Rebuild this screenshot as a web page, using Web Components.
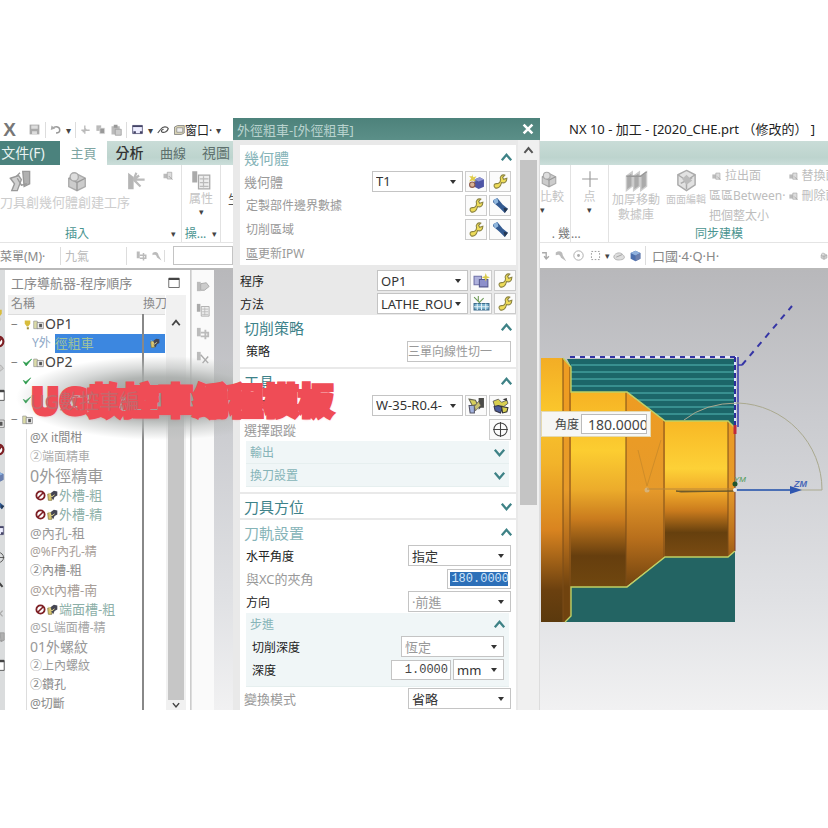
<!DOCTYPE html>
<html lang="zh-Hant">
<head>
<meta charset="utf-8">
<title>NX 10 - 加工</title>
<style>
body { margin: 0; background: #fff; color: #444; font-family: "Noto Sans", "Noto Sans CJK TC", sans-serif; font-size: 12px; }
</style>
</head>
<body>
<nx-app></nx-app>
<script>
const ICONS = {
  save: '<path d="M2 2h12v12H2z" fill="#aaa"/><path d="M4 3h8v4H4zM5 10h6v4H5z" fill="#ddd"/>',
  undo: '<path d="M3 6c5-4 10-2 10 2 0 3-3 4-5 4" fill="none" stroke="#999" stroke-width="2"/><path d="M1 8l1-6 5 4z" fill="#aaa"/>',
  cut: '<path d="M7 2v12M2 9h12M4 12l5-5" stroke="#bbb" stroke-width="2" fill="none"/>',
  copy: '<path d="M2 2h7v8H2z" fill="#bbb"/><path d="M7 6h7v8H7z" fill="#999" stroke="#ddd"/>',
  paste: '<path d="M2 3h11v11H2z" fill="#bbb"/><path d="M5 1h5v4H5z" fill="#999"/><path d="M7 7h8v8H7z" fill="#ccc" stroke="#999"/>',
  frame: '<path d="M2 3h12v10H2z" fill="#eef" stroke="#557" /><path d="M2 3h12v2H2z" fill="#446"/><path d="M3 10h3v3H3zM11 10h3v3h-3z" fill="#446"/>',
  link: '<path d="M1 12l4-5c3-4 8-4 10-1-1 4-5 6-8 5-2-1-1-4 2-4" fill="none" stroke="#555" stroke-width="1.6"/>',
  haze: '<path d="M1 10c0-4 6-7 10-4s4 6 0 7-9 1-10-3z" fill="#ddd" stroke="#aaa"/><path d="M4 10l7-3" stroke="#999"/>',
  win: '<path d="M2 4l4-2h9v10l-4 2H2z" fill="#d9d3b4" stroke="#777"/><path d="M5 5h8v6H5z" fill="#eee" stroke="#888"/>',
  tool: '<path d="M1 6l6-2 2 3-3 8H2l2-5z" fill="#d0d0d0" stroke="#999"/><path d="M10 1h5v9l-4 2z" fill="#b0b0b0" stroke="#999"/><path d="M6 6l3 5 4-1M8 2l-3 3" fill="none" stroke="#999"/>',
  box: '<path d="M2 6l6-3 6 3v6l-6 3-6-3z" fill="#ccc" stroke="#aaa"/><path d="M2 6l6 3 6-3M8 9v6" fill="none" stroke="#999"/><circle cx="6" cy="5" r="3" fill="#ddd" stroke="#aaa"/>',
  op: '<path d="M3 2l4 3v9H3z" fill="#b5b5b5"/><path d="M7 7h8M9 2l-2 5 5 5M11 4l-4 3" stroke="#bbb" stroke-width="1.6" fill="none"/>',
  prop: '<path d="M1 1h4v9H1z" fill="#aaa"/><path d="M6 4h9v11H6z" fill="#eee" stroke="#aaa"/><path d="M7 7h7M7 10h7M7 13h7M10 5v9" stroke="#bbb"/>',
  small: '<path d="M2 5h8v6H2z" fill="#bbb"/><path d="M7 3h6v9H7z" fill="#ddd" stroke="#aaa"/><path d="M9 8l5 5" stroke="#999"/>',
  plus: '<path d="M8 1v14M1 8h14" stroke="#999"/>',
  stack: '<path d="M1 5l4-3v10l-4 3zM6 5l4-3v10l-4 3zM11 5l4-3v10l-4 3z" fill="#aaa" stroke="#ccc"/><path d="M1 5h10l4-3" fill="none" stroke="#999"/>',
  hex: '<path d="M8 1l6 3v7l-6 4-6-4V4z" fill="#e2e2e2" stroke="#aaa"/><path d="M2 4l6 4 6-4M8 8v6M4 10l8-4" fill="none" stroke="#aaa"/><path d="M5 7l3-3 4 4-4 3z" fill="#bbb"/>',
  cube: '<path d="M2 5l6-3 6 3v7l-6 3-6-3z" fill="#4b6fae"/><path d="M2 5l6-3 6 3-6 3z" fill="#8fb1de"/><path d="M8 8l6-3v7l-6 3z" fill="#6b7fae"/>',
  target: '<circle cx="8" cy="8" r="5" fill="none" stroke="#aaa"/><circle cx="8" cy="8" r="1.5" fill="#aaa"/>',
  dash: '<path d="M3 3h10v10H3z" fill="none" stroke="#888" stroke-dasharray="2 2"/>',
  arrow: '<path d="M3 4h6v8M6 9l3 4 4-4" fill="none" stroke="#aaa" stroke-width="2"/>',
  wand: '<path d="M2 4c4-3 8-1 8 3l4 7-6-4C7 6 5 6 2 7z" fill="#bbb"/>',
  max: '<path d="M1 2h14v12H1z" fill="#fff" stroke="#444"/><path d="M1 1h14v3H1z" fill="#444"/>',
  up: '<path d="M3 11l5-6 5 6" fill="none" stroke="currentColor" stroke-width="2.4"/>',
  down: '<path d="M3 5l5 6 5-6" fill="none" stroke="currentColor" stroke-width="2.4"/>',
  folder: '<path d="M1 3h5l1 2v9H1z" fill="#dcdca8" stroke="#999"/><path d="M6 5h9v9H6z" fill="#eee" stroke="#777"/><path d="M9 7h4v5H9z" fill="#555"/>',
  bulb: '<path d="M4 2h8v5l-3 4H7L4 7z" fill="#d8bd3c"/><path d="M7 12h3v3H7z" fill="#a0903c"/>',
  check: '<path d="M2 7l4 6 8-10-8 6z" fill="#2c9a4c" stroke="#2c9a4c"/>',
  ban: '<circle cx="8" cy="8" r="6" fill="#fff" stroke="#7d1f24" stroke-width="2.6"/><path d="M4 12l8-8" stroke="#7d1f24" stroke-width="2.4"/>',
  mill: '<path d="M1 6l6-1v10H2z" fill="#d8c56c" stroke="#776a35"/><path d="M6 4l4-3 5 1v6l-4 2-2 5-3-5z" fill="#454552"/><path d="M2 4l5 6 4-3" stroke="#e5d990" stroke-width="1.4" fill="none"/>',
  wrench: '<path d="M3 14c-2-2-1-4 1-4 3 0 4-2 4-4-1-2 1-5 4-4l-2 2 1 2 3-1c0 3-2 5-5 4-1 4-3 6-6 5z" fill="#eedc58" stroke="#8b8340"/>',
  torch: '<path d="M1 3l4-2 5 6 5 4-3 4-5-5-6-5z" fill="#335a91"/><path d="M1 3l4-2 1 4-3 2z" fill="#8fb6dd"/><path d="M11 10l4 1-3 4z" fill="#24364f"/>',
  geo: '<path d="M6 6l5-2 4 2v7l-5 2-4-2z" fill="#4d55a5"/><path d="M6 6l5-2 4 2-5 2z" fill="#8f95d4"/><circle cx="4" cy="11" r="2.5" fill="#d9b394" stroke="#8c5a4a"/><path d="M4 1l1 3 3-1-2 3 2 2-4-1-3 1 2-3-2-2h3z" fill="#e0cc49"/>',
  prog: '<path d="M1 4h7v8H1z" fill="#aeb1dc" stroke="#6d6fa7"/><path d="M6 7h8v7H6z" fill="#8c8fcb" stroke="#55588f"/><path d="M12 1l1 3 3 1-3 1-1 3-1-3-3-1 3-1z" fill="#d8c94b"/>',
  meth: '<path d="M1 8h14v6H1z" fill="#7ab3cf" stroke="#3c6b8b"/><path d="M1 11h14M4 8v6M8 8v6M12 8v6" stroke="#e5f2f8"/><path d="M1 2l5 5 4-4M5 1v5" stroke="#6d9a55" fill="none"/>',
  tnew: '<path d="M1 8h5v7H2z" fill="#a3b3df" stroke="#556"/><path d="M1 2l6 1 2 4-5 1z" fill="#d7d05c" stroke="#665"/><path d="M10 1h5v9h-3l-2 2z" fill="#4b4b48"/><path d="M6 9l4-5 2 4-5 5z" fill="#c9c272" stroke="#555" stroke-width=".7"/>',
  tedit: '<path d="M1 4l5-2 3 3 5-2 1 3-4 3-4-1-4 2z" fill="#d8cf50" stroke="#555" stroke-width=".8"/><path d="M2 9l4-1 4 2-2 5-5-2z" fill="#4b5c9a" stroke="#334"/><path d="M9 9l6 1-1 4-4 1z" fill="#d8cf50" stroke="#333"/><path d="M10 2l4-1v3z" fill="#333"/>',
  cross: '<circle cx="8" cy="8" r="6.2" fill="none" stroke="#444"/><path d="M8 1v14M1 8h14" stroke="#444"/>',
  close: '<path d="M3 3l10 10M13 3L3 13" stroke="#fff" stroke-width="3"/>',
  pick: '<path d="M1 3h4v10H1z" fill="#bbb"/><path d="M5 5l6-1 3 4-5 4H5z" fill="#ccc" stroke="#aaa"/>',
  pickx: '<path d="M1 2h4v9H1z" fill="#bbb"/><path d="M5 5l8 9M13 7l-6 7" stroke="#aaa" stroke-width="1.5"/>',
  pickp: '<path d="M1 2h4v9H1z" fill="#bbb"/><path d="M5 7h8v4H5M10 4v10" fill="none" stroke="#bbb" stroke-width="2"/>'
};
const svg = (n, s) => `<svg viewBox="0 0 16 16" width="${s}" height="${s}" aria-hidden="true">${ICONS[n] || ''}</svg>`;
const define = (name, render) => customElements.define(name, class extends HTMLElement {
  connectedCallback() {
    if (this.shadowRoot) return;
    this.attachShadow({ mode: 'open' }).innerHTML = '<style>:host,*{box-sizing:border-box}svg{display:block;flex:none}button{font:inherit;color:inherit;border:0;padding:0;background:none}</style>' + render(this);
  }
});

define('nx-icon', el => {
  const s = el.getAttribute('size') || 16;
  return `<style>:host{display:inline-block;flex:none}</style>${svg(el.getAttribute('name'), s)}`;
});

define('nx-titlebar', () => `
<style>
:host{display:grid;grid-template-columns:var(--left) 1fr;column-gap:var(--dialog);height:23px;background:#fff}
.quick{display:flex;align-items:center;overflow:hidden;gap:4px}
.logo{font:bold 19px "Liberation Sans",sans-serif;color:#777;width:16px;margin-right:8px;display:flex;justify-content:flex-end;flex:none}
.sep{width:1px;height:16px;background:#ddd}
.caret{font-size:10px;color:#444}
.win{display:flex;align-items:center;white-space:nowrap;color:#222}
h1{margin:0;padding-left:29px;font-size:13px;font-weight:400;line-height:23px;color:#222;white-space:pre}
</style>
<div class="quick"><span class="logo">X</span>
<button aria-label="保存">${svg('save', 13)}</button><i class="sep"></i>
<button aria-label="撤銷">${svg('undo', 12)}</button><span class="caret">▾</span><i class="sep"></i>
<button aria-label="剪切">${svg('cut', 11)}</button><button aria-label="複製">${svg('copy', 11)}</button><button aria-label="粘貼">${svg('paste', 12)}</button><i class="sep"></i>
<button aria-label="視窗框">${svg('frame', 13)}</button><span class="caret">▾</span>
<button aria-label="鏈接">${svg('link', 12)}</button>
<button class="win">${svg('win', 12)}窗口·</button><span class="caret">▾</span></div>
<h1>NX 10 - 加工 - [2020_CHE.prt （修改的） ]</h1>`);

define('nx-tabs', () => `
<style>
:host{display:flex;height:24px;background:linear-gradient(#c9dcd7,#bdd4ce 70%,#cbdeda);font-size:14px;color:#5d706d;overflow:hidden}
button{line-height:24px;text-align:center;white-space:nowrap;flex:none}
.file{width:60px;background:#4b827d;color:#e9f3f1;padding-right:14px}
.home{width:47px;background:#fff;color:#7ea5a2;font-size:13px}
.an{width:45px;color:#333;font-weight:500}.cv{width:42px;font-size:13px}.vw{width:44px}
</style>
<button class="file">文件(F)</button><button class="home">主頁</button><button class="an">分析</button><button class="cv">曲線</button><button class="vw">視圖</button>`);

define('nx-ribbon', () => `
<style>
:host{display:grid;grid-template-columns:var(--left) minmax(0,1fr);column-gap:var(--dialog);height:78px;background:#fff;color:#c4c4c4;border-bottom:1px solid #e4e4e4}
.side{display:flex;overflow:hidden;white-space:nowrap}
.group{display:flex;flex-direction:column;border-right:1px solid #e2e2e2;padding:5px 0 0;flex:none}
.body{flex:1;display:flex;min-height:0}
.cap{color:#4a9490;text-align:center;line-height:16px;display:flex;justify-content:center}
.cap b{font-weight:400;color:#444;font-size:9px}
.cap .r{margin-left:auto}
.col{display:flex;flex-direction:column;align-items:center;line-height:18px}
.car{color:#444;font-size:9px;line-height:8px}
.icons{display:grid;grid-template-columns:40px 74px 42px 24px;justify-items:center}
.txt{line-height:20px;font-size:13px;color:#cdcdcd}
.list{display:flex;flex-direction:column;line-height:20px;color:#bdbdbd}
.list span{display:flex;align-items:center;gap:3px}
</style>
<div class="side">
 <div class="group" style="width:182px"><div class="body" style="display:block"><div class="icons">${svg('tool', 22)}${svg('box', 22)}${svg('op', 22)}${svg('small', 12)}</div><div class="txt">刀具創幾何體創建工序</div></div>
 <div class="cap"><span style="margin-left:65px">插入</span><b class="r" style="padding-right:5px">▾</b></div></div>
 <div class="group" style="width:39px"><div class="body col">${svg('prop', 20)}<span>属性</span><span class="car">▾</span></div><div class="cap">操...<b style="padding-left:6px">▾</b></div></div>
 <div class="group" style="border:0;padding:25px 0 0 7px;color:#555">生</div>
</div>
<div class="side">
 <div class="group" style="width:31px"><div class="body col" style="align-items:flex-start">${svg('box', 18)}<span>比較</span><span class="car">▾</span></div><div class="cap" style="color:#777;justify-content:flex-end">.&nbsp;幾</div></div>
 <div class="group" style="width:38px"><div class="body col">${svg('plus', 18)}<span>点</span><span class="car">▾</span></div><div class="cap" style="color:#777;justify-content:flex-start">...</div></div>
 <div class="group" style="border:0;width:230px;padding-top:1px"><div class="body" style="gap:2px">
  <div class="col" style="width:54px;line-height:15px;padding-top:3px">${svg('stack', 23)}<span>加厚移動</span><span>數據庫</span></div>
  <div class="col" style="width:42px;line-height:15px;padding-top:3px">${svg('hex', 23)}<span style="font-size:10px">面面編輯</span></div>
  <div class="list"><span style="padding-left:2px">${svg('small', 11)}拉出面</span><span>區區Between·</span><span>把個整太小</span></div>
  <div class="list"><span>${svg('small', 11)}替換面</span><span>${svg('small', 11)}刪除面</span></div>
 </div><div class="cap" style="padding-left:86px;justify-content:flex-start">同步建模</div></div>
</div>`);

define('nx-toolbar', () => `
<style>
:host{display:grid;grid-template-columns:var(--left) minmax(0,1fr);column-gap:var(--dialog);height:27px;background:#fff;border-bottom:2px solid #b9b9b9;color:#888}
.side{display:flex;align-items:center;overflow:hidden;white-space:nowrap}
.a{width:61px;border-right:1px solid #ddd;text-align:left;flex:none}.b{width:78px;padding-left:4px;border-right:1px solid #ddd;color:#bbb}
.c{width:43px;display:flex;gap:3px;padding-left:9px;border-right:1px solid #ddd}
input{width:60px;height:19px;margin-left:8px;border:1px solid #c4c4c4;background:#fff;flex:none}
.right{gap:3px}
</style>
<div class="side"><button class="a">菜單(M)·</button><span class="b">九氣</span><span class="c">${svg('pickp', 12)}${svg('wand', 12)}</span><input aria-label="選擇過濾器"></div>
<div class="side right">${svg('arrow', 11)}${svg('wand', 14)}${svg('target', 15)}${svg('dash', 13)}<span style="color:#444;font-size:9px">▾</span>${svg('haze', 13)}${svg('cube', 13)}<span style="border-left:1px solid #ddd;padding-left:6px;font-size:13px">口國·4·Q·H·</span><span style="margin-left:auto">${svg('box', 8)}</span></div>`);

const rows = [
  ['fold', 'OP1', 14, 'bulb'], ['sel', '外徑粗車', 12], ['fold', 'OP2', 14, 'check'], ['chk'], ['chk'], ['root'],
  ['', '@X it間柑', 12, '#888'], ['', '②端面精車', 12, '#aaa'], ['', '0外徑精車', 16, '#999'], ['ban', '外槽-粗', 13], ['ban', '外槽-精', 13],
  ['', '@內孔-租', 13, '#999'], ['', '@%F內孔-精', 12, '#a89e98'], ['', '②內槽-粗', 12, '#888'], ['', '@Xt內槽-南', 13, '#a89e98'], ['ban', '端面槽-粗', 13],
  ['', '@SL端面槽-精', 12, '#a5a5a5'], ['', '01外螺紋', 14, '#999'], ['', '②上內螺紋', 12, '#999'], ['', '②鑽孔', 12, '#888'], ['', '@切斷', 12, '#888']
];
const navRow = ([k, t, s, x]) => {
  let c;
  if (k === 'fold') c = `<i class="m">−</i><i class="ic">${svg(x, 11)}</i>${svg('folder', 11)}<span style="font-size:${s}px;color:#444">${t}</span>`;
  else if (k === 'sel') c = `<span class="y">Y外</span><span class="hl">徑粗車</span>`;
  else if (k === 'chk') c = `<i class="m"></i><i class="ic">${svg('check', 10)}</i>`;
  else if (k === 'root') c = `<i class="m">−</i>${svg('folder', 11)}`;
  else if (k === 'ban') c = `<i class="ind"></i>${svg('ban', 11)}${svg('mill', 11)}<span style="font-size:${s}px;color:#8cafa8">${t}</span>`;
  else c = `<i class="ind in"></i><span style="font-size:${s}px;color:${x}">${t}</span>`;
  return `<tr><td><div class="r">${c}</div></td><td class="${k === 'sel' ? 'on' : ''}">${k === 'sel' ? svg('mill', 10) : ''}</td></tr>`;
};
define('nx-navigator', () => `
<style>
:host{display:flex;flex-direction:column;background:#fff;overflow:hidden;border-right:1px solid #ccc}
header{display:flex;align-items:center;justify-content:space-between;padding:0 10px 0 6px;height:25px;flex:none;color:#888;font-size:13px;white-space:nowrap}
.main{display:flex;flex:1;min-height:0;padding:0 4px 0 3px;overflow:hidden}
table{border-collapse:collapse;table-layout:fixed;width:157px;flex:none;align-self:flex-start}
th{height:19px;padding:0 0 0 3px;text-align:left;font-weight:400;font-size:12px;line-height:18px;color:#888;background:#f1f1f1;border-bottom:1px solid #ddd}
td{padding:0;height:19px;line-height:18px}
td:first-child{border-right:2px solid #888}
td.on{background:#3c87e0;padding-left:6px}
.r{display:flex;align-items:center;height:19px;white-space:nowrap;gap:1px}
i{font-style:normal;flex:none}.m{width:13px;padding-left:3px;line-height:19px;color:#777}.ic{width:10px;display:flex;justify-content:center}
.ind{width:19px;height:19px;border-right:1px solid #ddd;margin-right:7px}
.in{margin-right:2px}
.y{padding-left:24px;padding-right:3px;color:#8fa9c8}.hl{background:#3c87e0;color:#9fc29c;flex:1;line-height:19px;font-size:13px}
.bar{width:20px;display:flex;flex-direction:column;align-items:center;background:#f1f1f1;flex:none;color:#444;margin-left:auto}
.track{flex:1;width:16px;background:#c6c6c6;margin-top:60px}
.bar .sp{height:22px}
</style>
<header>工序導航器-程序順序<button aria-label="最大化">${svg('max', 12)}</button></header>
<div class="main"><table><colgroup><col><col style="width:22px"></colgroup><thead><tr><th>名稱</th><th style="overflow:visible;white-space:nowrap;padding:0">換刀</th></tr></thead><tbody>${rows.map(navRow).join('')}</tbody></table>
<div class="bar"><i class="sp"></i>${svg('up', 12)}<div class="track"></div>${svg('down', 10)}</div></div>`);

const lines = Array.from({ length: 8 }, (_, i) => 365 + i * 7);
const lineStart = y => y < 392 ? 571 : Math.round(627 + (y - 392) * 38 / 29);
define('nx-viewport', () => `
<style>
:host{display:block;position:relative;overflow:hidden;background:linear-gradient(#b8b8bb,#cbccd0 35%,#e0e1e4 75%,#f1f1f2)}
.scene{width:100%;height:100%}
.angle{position:absolute;left:327px;top:141px;display:flex;align-items:center;gap:2px;height:26px;padding:2px 3px 2px 13px;background:#f6f6f4;border:1px solid #e4d9b0;color:#444}
.angle input{width:66px;height:20px;border:1px solid #bbb;font:14px "Noto Sans",sans-serif;color:#444;padding:0 0 0 6px}
</style>
<svg class="scene" viewBox="214 270 614 440" preserveAspectRatio="xMinYMin meet" role="img" aria-label="車削零件刀軌">
<defs>
<linearGradient id="a" gradientUnits="userSpaceOnUse" x1="0" y1="358" x2="0" y2="622"><stop offset="0" stop-color="#f3ad25"/><stop offset=".2" stop-color="#fac62c"/><stop offset=".4" stop-color="#f2b32a"/><stop offset=".65" stop-color="#d98420"/><stop offset=".88" stop-color="#6b400f"/><stop offset="1" stop-color="#5b390d"/></linearGradient>
<linearGradient id="b" gradientUnits="userSpaceOnUse" x1="0" y1="392" x2="0" y2="587"><stop offset="0" stop-color="#f6b324"/><stop offset=".3" stop-color="#fccd31"/><stop offset=".5" stop-color="#ecac2b"/><stop offset=".65" stop-color="#ca7c1e"/><stop offset=".84" stop-color="#663e0e"/><stop offset="1" stop-color="#70470f"/></linearGradient>
<linearGradient id="c" gradientUnits="userSpaceOnUse" x1="0" y1="421" x2="0" y2="557"><stop offset="0" stop-color="#f8b825"/><stop offset=".35" stop-color="#fdd137"/><stop offset=".52" stop-color="#efa92a"/><stop offset=".66" stop-color="#ca7b1d"/><stop offset=".82" stop-color="#66400e"/><stop offset="1" stop-color="#7a4b12"/></linearGradient>
<linearGradient id="d" gradientUnits="userSpaceOnUse" x1="0" y1="392" x2="0" y2="587"><stop offset="0" stop-color="#ee9c22"/><stop offset=".5" stop-color="#e69a2a"/><stop offset=".75" stop-color="#b86f1c"/><stop offset="1" stop-color="#70430f"/></linearGradient>
</defs>
<path d="M541 358h22v264h-22z" fill="url(#a)"/><path d="M563 358l8 9v249l-6 6h-2z" fill="url(#d)"/>
<path d="M571 392h55v195h-55z" fill="url(#b)"/><path d="M626 392l39 29v136l-39 30z" fill="url(#d)"/>
<path d="M665 421h63v136h-63z" fill="url(#c)"/><path d="M728 421l7 7v123l-7 6z" fill="url(#d)"/>
<path d="M563 358v264M570 367v249M626 392v195M664 421v136M728 421v136" stroke="#7a4d18" fill="none"/>
<path d="M567 359h169v69l-8-7h-63l-38-29h-56v-25z" fill="#1c6669"/>
<path d="M565 622l6-6v-29h56l38-30h63l7-6v71z" fill="#236463"/>
<g stroke="#55b9b7">${lines.map(y => `<path d="M${lineStart(y)} ${y}H735"/>`).join('')}</g>
<path d="M563 358l8 9v25h56l38 29h63l7 7M565 622l6-6v-29h56l38-30h63l7-6" fill="none" stroke="#bfd166" stroke-width="1.4"/>
<path d="M570 357H737" stroke="#e6ebff" stroke-width="2"/><path d="M570 357H737" stroke="#3234a3" stroke-width="2" stroke-dasharray="5 5"/>
<path d="M735 357V427" stroke="#dde4ff" stroke-width="2"/><path d="M735 357V427" stroke="#2b2e9b" stroke-width="2" stroke-dasharray="5 3"/><path d="M738 357V427M738 365h4" stroke="#3a3ab0" stroke-width="1.5"/>
<path d="M742 365L792 306" stroke="#3535a5" stroke-width="2" stroke-dasharray="6 6"/>
<path d="M735 425v9" stroke="#c0283a" stroke-width="3"/><path d="M735 434v117" stroke="#7b3b2a"/>
<path d="M684 420Q705 403 738 403A87 87 0 0 1 822 490H735" fill="none" stroke="#aaa98f"/>
<path d="M638 450l9 36 14-46" stroke="#cf8d28" fill="none"/><circle cx="647" cy="490" r="2.5" fill="#d7b278"/><path d="M647 489h88" stroke="#b8863a"/><path d="M681 491h54l-54 1-5-1z" stroke="#6f5a2c" fill="#6f5a2c"/>
<path d="M735 490h58" stroke="#4a6fb5" stroke-width="2"/><path d="M790 486l12 4-12 4z" fill="#2f56b0"/><circle cx="735" cy="484" r="2.5" fill="#22552c"/><circle cx="735" cy="490" r="2" fill="#eee"/>
<text x="734" y="482" font-size="8" fill="#4e9a54" font-style="italic" font-family="Liberation Sans">YM</text><text x="794" y="487" font-size="9" font-weight="bold" fill="#4867b8" font-style="italic" font-family="Liberation Sans">ZM</text>
</svg>
<div class="angle"><label for="ang">角度</label><input id="ang" value="180.00000"></div>`);

define('nx-field', el => {
  const g = n => el.getAttribute(n), lab = g('label'), light = el.hasAttribute('light');
  let ctl = '';
  if (g('text')) ctl += `<input id="c" value="${g('text')}" style="width:${g('tw') || 60}px" class="${el.hasAttribute('picked') ? 'picked' : ''}">`;
  if (g('select')) ctl += `<span class="s ${el.hasAttribute('bare') ? 'bare' : ''}" style="width:${g('w')}px"><select ${g('text') ? 'aria-label="單位"' : 'id="c"'} style="${el.hasAttribute('thin') ? 'color:#999' : ''}"><option>${g('select')}</option></select></span>`;
  (g('icons') || '').split(',').filter(Boolean).forEach(i => ctl += `<button aria-label="${lab} ${i}">${svg(i, 17)}</button>`);
  return `<style>
:host{display:flex;align-items:center;gap:2px;height:var(--row,24px);padding:0 5px 0 6px;white-space:nowrap}
label,.l{flex:1;font-size:${g('size') || 12}px;color:${light ? '#999' : '#222'}}
button{width:22px;height:21px;border:1px solid #ccc;background:#fbfbfb;display:flex;align-items:center;justify-content:center}
.s{position:relative;height:21px;display:block}
.s::after{content:"";position:absolute;right:7px;top:9px;border:3px solid transparent;border-top:4px solid #333;pointer-events:none}
.s.bare::after{display:none}
select{appearance:none;width:100%;height:21px;border:1px solid #c4c4c4;border-radius:0;background:#fff;padding:0 0 0 3px;font:13px "Noto Sans","Noto Sans CJK TC",sans-serif;color:#333}
.s.bare select{padding-left:0;font-size:12px}
input{height:20px;border:1px solid #c4c4c4;text-align:right;font:12px "Liberation Mono",monospace;color:#444;padding:0 2px}
input.picked{color:#cfe4fa;background:linear-gradient(#2c6fb8,#2c6fb8) center/58px 14px no-repeat #fff;padding:0 1px}
</style>${ctl.match(/id="c"/) ? `<label for="c">${lab}</label>` : `<span class="l">${lab}</span>`}${ctl}`;
});

define('nx-section', el => {
  const sub = el.hasAttribute('sub'), open = el.hasAttribute('open');
  return `<style>
:host{display:block;flex:none;background:${sub ? '#f0f6f7' : '#fff'};margin:${sub ? '0 7px 0 6px' : '0 0 2px'};${sub ? '--row:23px;border:1px solid #e6efef;border-width:0 0 1px' : ''}}
button{display:flex;align-items:center;justify-content:space-between;width:100%;height:${sub ? 22 : 24}px;padding:0 2px 0 4px;font-size:${sub ? 12 : 15}px;color:${el.hasAttribute('light') ? '#86b4b8' : '#3d8289'}}
svg{color:#3e8286}
</style><button aria-expanded="${open}">${el.getAttribute('title-text')}${svg(open ? 'up' : 'down', 15)}</button><slot></slot>`;
});

define('nx-dialog', () => `
<style>
:host{display:flex;flex-direction:column;background:#e9e9e9;overflow:hidden}
header{height:22px;flex:none;background:linear-gradient(#4d827b,#5b8f88);display:flex;align-items:center;justify-content:space-between;padding:0 5px 0 4px;color:#b9d3cf;font-size:13px}
.wrap{flex:1;display:flex;min-height:0}
.body{flex:1;padding:5px 2px 0 7px;overflow:hidden;display:flex;flex-direction:column}
.bar{width:22px;flex:none;display:flex;flex-direction:column;align-items:center;background:#f0f0f0;padding-top:4px;color:#555;border-right:1px solid #ddd}
.thumb{width:17px;height:61%;background:#c4c4c4;margin-top:3px}
.g{padding:4px 0 0;--row:23px;flex:none}
.g nx-field{padding:0 0}
</style>
<header>外徑粗車-[外徑粗車]<button aria-label="關閉">${svg('close', 14)}</button></header>
<div class="wrap"><div class="body">
<nx-section title-text="幾何體" open light style="margin:0">
 <nx-field label="幾何體" select="T1" w="91" icons="geo,wrench" light size="13" style="padding-left:4px"></nx-field>
 <nx-field label="定製部件邊界數據" icons="wrench,torch" light></nx-field>
 <nx-field label="切削區域" icons="wrench,torch" light></nx-field>
 <nx-field label="&lt;u&gt;區&lt;/u&gt;更新IPW" light></nx-field>
</nx-section>
<div class="g"><nx-field label="程序" select="OP1" w="91" icons="prog,wrench"></nx-field><nx-field label="方法" select="LATHE_ROU" w="91" icons="meth,wrench"></nx-field></div>
<nx-section title-text="切削策略" open style="padding-bottom:4px">
 <nx-field label="策略" select="三單向線性切一" w="104" bare thin></nx-field></nx-section>
<nx-section title-text="工具" open style="padding-bottom:5px">
 <nx-field label="刀具" select="W-35-R0.4-" w="91" icons="tnew,tedit"></nx-field>
 <nx-field label="選擇跟蹤" icons="cross" light size="13" style="padding-left:4px"></nx-field>
 <nx-section title-text="輸出" sub light></nx-section><nx-section title-text="換刀設置" sub light></nx-section></nx-section>
<nx-section title-text="刀具方位"></nx-section>
<nx-section title-text="刀軌設置" open light style="--row:23px">
 <nx-field label="水平角度" select="指定" w="103"></nx-field>
 <nx-field label="與XC的夾角" text="180.0000" tw="64" picked light size="13"></nx-field>
 <nx-field label="方向" select="·前進" w="103" thin></nx-field>
 <nx-section title-text="步進" sub open light style="padding-bottom:5px">
  <nx-field label="切削深度" select="恆定" w="103" thin></nx-field>
  <nx-field label="深度" text="1.0000" tw="60" select="mm" w="51"></nx-field>
 </nx-section>
 <nx-field label="變換模式" select="省略" w="103" light size="13" style="padding-left:4px"></nx-field>
</nx-section>
</div><div class="bar">${svg('up', 13)}<div class="thumb"></div></div></div>`);

define('nx-app', () => `
<style>
:host{--left:233px;--dialog:307px;display:block;padding:118px 0;height:100vh}
.frame{position:relative;display:flex;flex-direction:column;height:100%;overflow:hidden}
.work{flex:1;min-height:0;display:grid;grid-template-columns:5px 186px 23px minmax(0,1fr);grid-template-rows:minmax(0,1fr)}
.edge{background:#dadcdd;display:flex;flex-direction:column;align-items:center;gap:14px;padding-top:38px;overflow:hidden}
.edge nx-icon{margin-left:-8px}
.strip{background:#fafafa;border-left:1px solid #ddd;display:flex;flex-direction:column;align-items:center;gap:9px;padding-top:9px}
.haze{position:absolute;left:16px;top:238px;width:290px;height:84px;background:radial-gradient(closest-side,#909492 0,#a6aaa8e0 50%,#b9bcbb90 72%,#c9cbca00 100%)}
nx-dialog{position:absolute;left:var(--left);top:0;bottom:0;width:var(--dialog)}
.mark{position:absolute;left:31px;top:260px;font:900 35px/48px "DejaVu Sans","Noto Sans CJK TC",sans-serif;color:#ef4c56;-webkit-text-stroke:4px #ef4c56;text-shadow:0 1px 3px #ef4c56;white-space:nowrap}
.ghost{position:absolute;left:30px;top:272px;font-size:20px;line-height:24px;color:#c4686c;white-space:nowrap}
</style>
<div class="frame">
<nx-titlebar></nx-titlebar><nx-tabs></nx-tabs><nx-ribbon></nx-ribbon><nx-toolbar></nx-toolbar>
<div class="work"><div class="edge">${['bulb', 'ban', 'pick', 'max', 'folder', 'ban', 'cube', 'torch', 'frame', 'cross', 'up', 'pickx', 'tool', 'max'].map(n => `<nx-icon name="${n}" size="13"></nx-icon>`).join('')}</div>
<nx-navigator></nx-navigator>
<div class="strip"><nx-icon name="pick" size="15"></nx-icon><nx-icon name="prop" size="14"></nx-icon><nx-icon name="pickp" size="15"></nx-icon><nx-icon name="pickx" size="15"></nx-icon></div>
<nx-viewport></nx-viewport></div>
<div class="haze"></div><nx-dialog></nx-dialog>
<div class="mark">UG數控車編程模板</div><div class="ghost">UG數控車編</div>
</div>`);
</script>
</body>
</html>
